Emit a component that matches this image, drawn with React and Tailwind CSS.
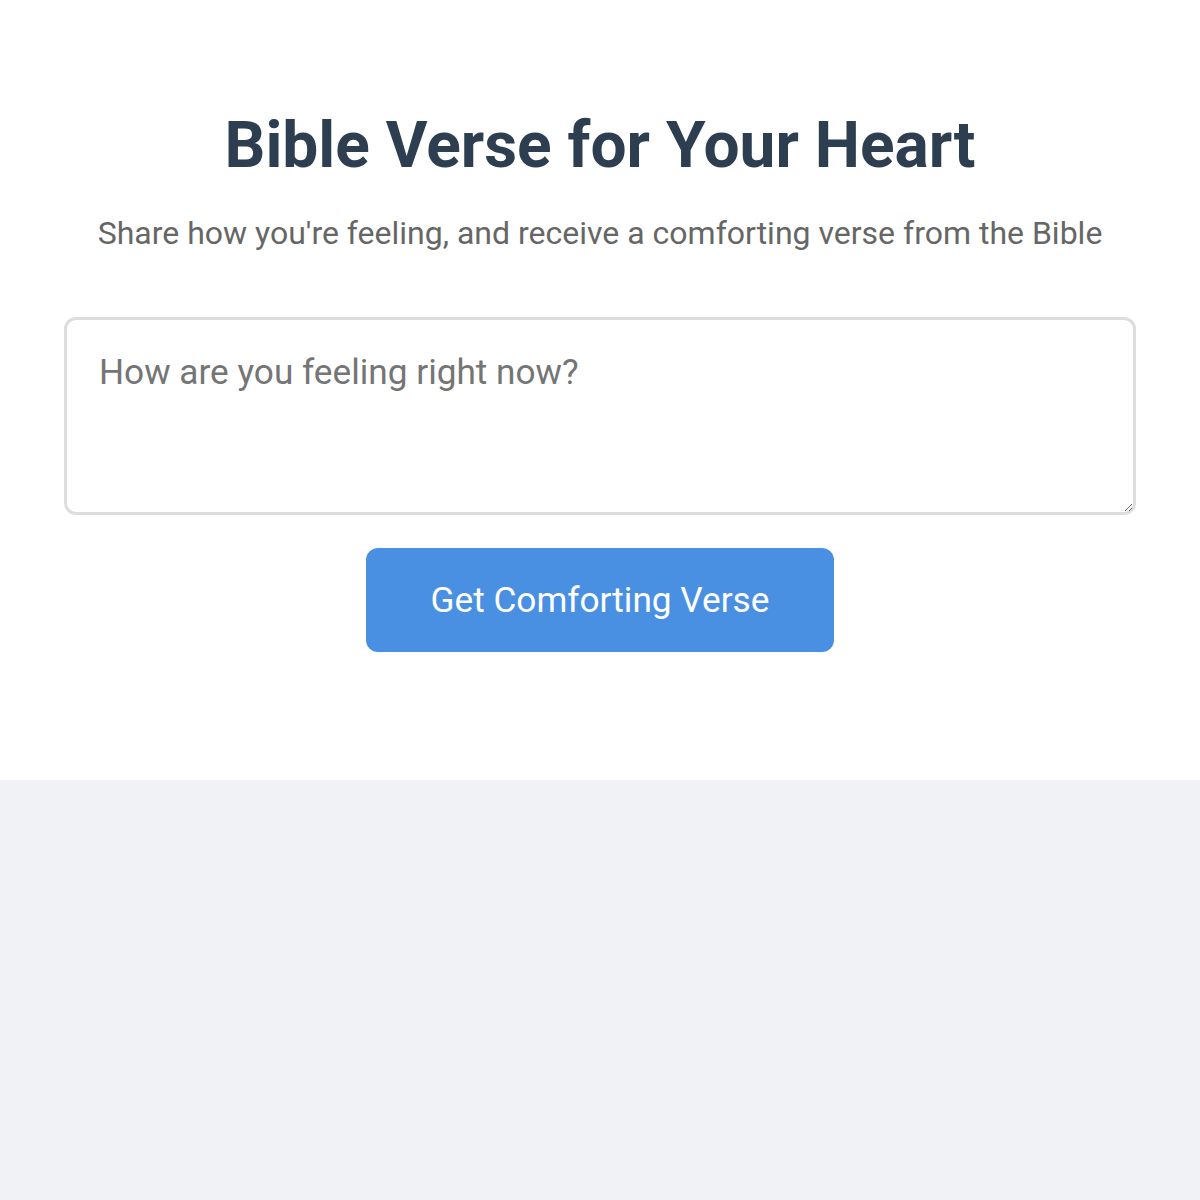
export default function App() {
  return (
    <div className="min-h-screen bg-[#f0f2f5]" style={{ fontFamily: "Roboto, 'Noto Sans', sans-serif" }}>
      <div className="bg-white px-16 pt-[108px] pb-[128px]">
        <h1 className="text-center text-[64px] font-bold leading-[1.2] text-[#2c3e50]">Bible Verse for Your Heart</h1>
        <p className="mt-[29px] text-center text-[32px] leading-[1.2] text-[#666]">Share how you're feeling, and receive a comforting verse from the Bible</p>
        <textarea
          className="mt-[65px] block h-[198px] w-full resize-y rounded-[12px] border-[3px] border-[#ddd] px-8 pt-[26px] pb-8 text-[35.2px] text-[#333] outline-none placeholder:text-[#757575]"
          placeholder="How are you feeling right now?"
        />
        <div className="mt-[33px] flex justify-center">
          <button className="h-[104px] w-[468px] rounded-[12px] bg-[#4a90e2] text-[35.2px] text-white">Get Comforting Verse</button>
        </div>
      </div>
    </div>
  );
}
